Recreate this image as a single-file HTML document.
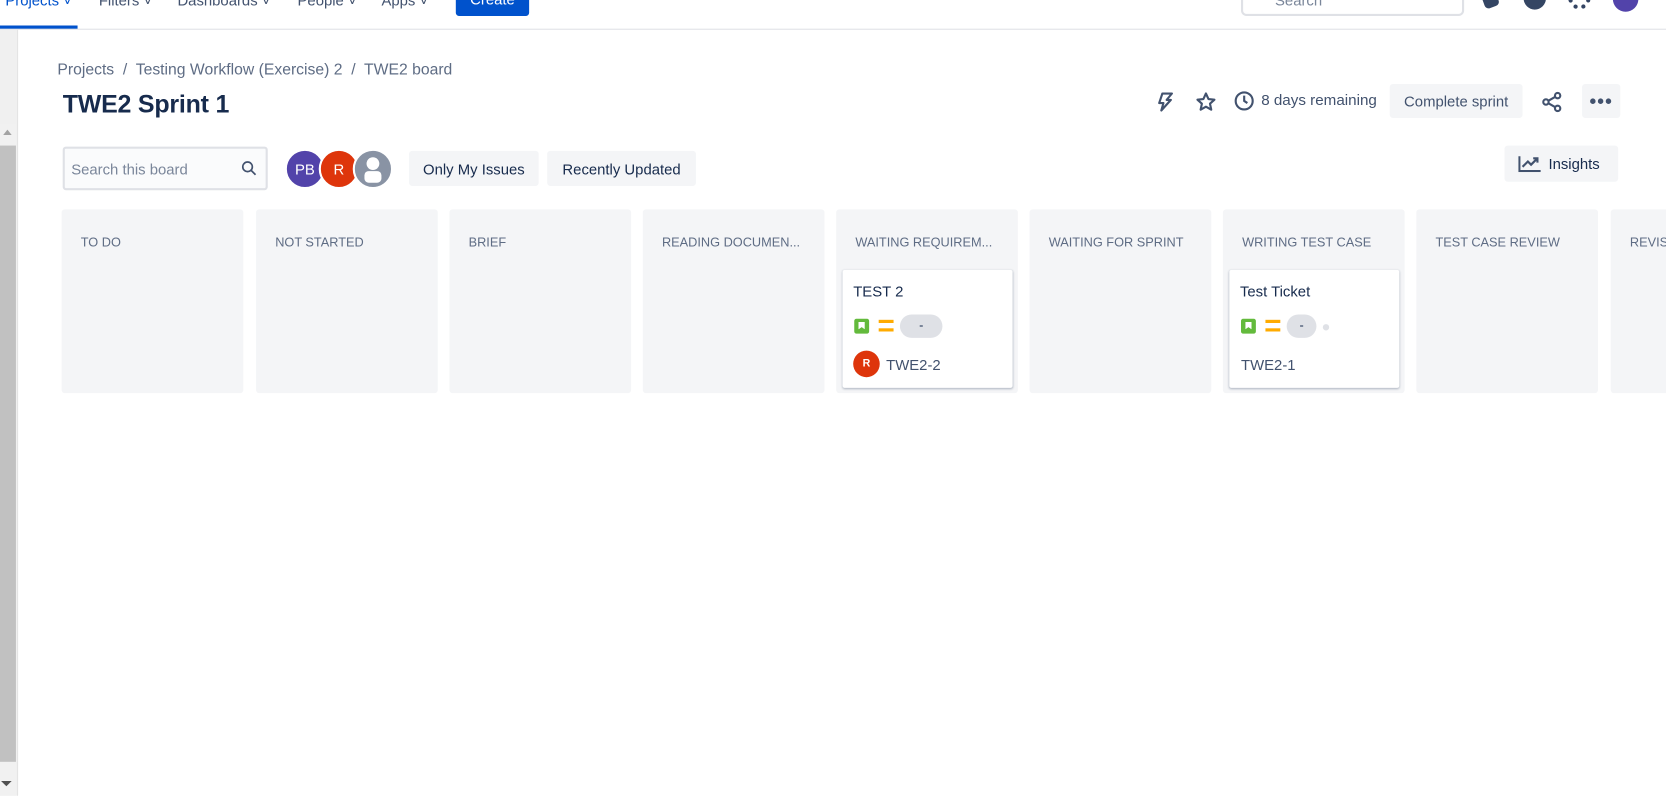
<!DOCTYPE html>
<html><head><meta charset="utf-8"><style>
*{box-sizing:border-box;margin:0;padding:0}
html,body{width:1666px;height:796px;overflow:hidden;background:#fff;font-family:"Liberation Sans",sans-serif}
#w{position:absolute;left:0;top:0;width:1568px;height:749px;transform:scale(1.0625);transform-origin:0 0;overflow:hidden}
.a{position:absolute}
.nav{font-size:14px;color:#42526e;top:-8px;white-space:nowrap}
.col{position:absolute;top:197px;width:171px;height:173px;background:#f4f5f7;border-radius:3px}
.col span{position:absolute;left:18px;top:24px;font-size:12px;color:#5e6c84;white-space:nowrap}
.btn{position:absolute;background:#f4f5f7;border-radius:3px;color:#42526e;font-size:14px;display:flex;align-items:center;justify-content:center}
.card{position:absolute;top:254px;width:160px;height:111px;background:#fff;border-radius:2px;box-shadow:0 1px 2px rgba(9,30,66,.3)}
.card .t{position:absolute;left:10px;top:12px;font-size:14px;color:#172b4d}
.story{position:absolute;left:11px;top:46px;width:14px;height:14px;background:#63ba3c;border-radius:2px}
.story:after{content:"";position:absolute;left:4px;top:3px;width:6px;height:7px;background:#fff;clip-path:polygon(0 0,100% 0,100% 100%,50% 70%,0 100%)}
.eq{position:absolute;left:34px;top:47px;width:14px;height:11px;border-top:3px solid #ffab00;border-bottom:3px solid #ffab00}
.pill{position:absolute;top:42px;height:22px;background:#dfe1e6;border-radius:11px;font-size:12px;color:#172b4d;text-align:center;line-height:20px}
.av{position:absolute;border-radius:50%;color:#fff;font-weight:bold;display:flex;align-items:center;justify-content:center}
</style></head><body><div id="w">
<div class="a" style="left:0;top:27px;width:1568px;height:1px;background:#dfe1e6"></div>
<div class="a nav" style="left:5px;color:#0052cc">Projects ˅</div>
<div class="a" style="left:0;top:24px;width:73px;height:3px;background:#0052cc"></div>
<div class="a nav" style="left:93px">Filters ˅</div>
<div class="a nav" style="left:167px">Dashboards ˅</div>
<div class="a nav" style="left:280px">People ˅</div>
<div class="a nav" style="left:359px">Apps ˅</div>
<div class="a" style="left:429px;top:-8px;width:69px;height:23px;background:#0052cc;border-radius:3px;color:#fff;font-size:14px;text-align:center;line-height:14px">Create</div>
<div class="a" style="left:1168px;top:-10px;width:210px;height:25px;border:2px solid #dfe1e6;border-radius:5px;font-size:14px;color:#7a869a;padding-left:30px;line-height:16px">Search</div>
<div class="a" style="left:1396px;top:-6px;width:14px;height:13px;background:#344563;border-radius:0 0 4px 4px;transform:rotate(-20deg)"></div>
<div class="a" style="left:1434px;top:-12px;width:21px;height:21px;background:#344563;border-radius:50%"></div>
<div class="a" style="left:1476px;top:-12px;width:21px;height:21px;border:4px dotted #344563;border-radius:50%"></div>
<div class="a" style="left:1518px;top:-13px;width:24px;height:24px;background:#5243aa;border-radius:50%"></div>
<div class="a" style="left:0;top:28px;width:17px;height:721px;background:#f0f0f0;border-right:1px solid #e4e4e4"></div>
<div class="a" style="left:0;top:117px;width:15px;height:632px;background:#f1f1f1"></div>
<div class="a" style="left:3px;top:122px;width:0;height:0;border-left:4px solid transparent;border-right:4px solid transparent;border-bottom:5px solid #a3a3a3"></div>
<div class="a" style="left:0;top:137px;width:15px;height:580px;background:#c1c1c1"></div>
<div class="a" style="left:1px;top:735px;width:0;height:0;border-left:5px solid transparent;border-right:5px solid transparent;border-top:5px solid #505050"></div>
<div class="a" style="left:54px;top:58px;font-size:14.8px;color:#5e6c84;white-space:nowrap">Projects &nbsp;/&nbsp; Testing Workflow (Exercise) 2 &nbsp;/&nbsp; TWE2 board</div>
<div class="a" style="left:59px;top:85px;font-size:23.5px;font-weight:bold;color:#172b4d;letter-spacing:-.2px">TWE2 Sprint 1</div>
<svg class="a" style="left:1086px;top:86px" width="20" height="20" viewBox="0 0 20 20" fill="none" stroke="#42526e" stroke-width="2" stroke-linejoin="round"><path d="M8 2h9l-5 6h4L7 18l2-7H5z"/></svg>
<svg class="a" style="left:1125px;top:86px" width="20" height="20" viewBox="0 0 20 20" fill="none" stroke="#42526e" stroke-width="2" stroke-linejoin="round"><path d="M10 2l2.4 5.2 5.6.6-4.2 3.8 1.2 5.6L10 14.4 5 17.2l1.2-5.6L2 7.8l5.6-.6z"/></svg>
<svg class="a" style="left:1161px;top:85px" width="20" height="20" viewBox="0 0 20 20" fill="none" stroke="#42526e" stroke-width="2"><circle cx="10" cy="10" r="8"/><path d="M10 5v5l3 2"/></svg>
<div class="a" style="left:1187px;top:87px;font-size:14.3px;color:#42526e">8 days remaining</div>
<div class="btn" style="left:1308px;top:79px;width:125px;height:32px">Complete sprint</div>
<svg class="a" style="left:1450px;top:85px" width="22" height="22" viewBox="0 0 22 22" fill="none" stroke="#42526e" stroke-width="2"><circle cx="16" cy="5" r="2.5"/><circle cx="16" cy="17" r="2.5"/><circle cx="5" cy="11" r="2.5"/><path d="M7 10l7-4M7 12l7 4"/></svg>
<div class="btn" style="left:1489px;top:79px;width:36px;height:32px;font-size:18px;font-weight:bold;letter-spacing:1px">•••</div>
<div class="a" style="left:59px;top:138px;width:193px;height:41px;background:#fafbfc;border:2px solid #dfe1e6;border-radius:3px"></div>
<div class="a" style="left:67px;top:151px;font-size:14px;color:#7a869a">Search this board</div>
<svg class="a" style="left:227px;top:151px" width="15" height="15" viewBox="0 0 15 15" fill="none" stroke="#42526e" stroke-width="1.6"><circle cx="6" cy="6" r="4.5"/><path d="M9.5 9.5l4 4"/></svg>
<div class="av" style="left:268px;top:140px;width:38px;height:38px;background:#5243aa;border:2px solid #fff;font-size:14px;font-weight:normal">PB</div>
<div class="av" style="left:300px;top:140px;width:38px;height:38px;background:#de350b;border:2px solid #fff;font-size:14px;font-weight:normal">R</div>
<div class="av" style="left:332px;top:140px;width:38px;height:38px;background:#8993a4;border:2px solid #fff">
<svg width="34" height="34" viewBox="0 0 34 34"><circle cx="17" cy="12" r="6" fill="#fff"/><rect x="9" y="19" width="16" height="11" rx="4" fill="#fff"/></svg></div>
<div class="btn" style="left:385px;top:142px;width:122px;height:33px;color:#172b4d">Only My Issues</div>
<div class="btn" style="left:515px;top:142px;width:140px;height:33px;color:#172b4d">Recently Updated</div>
<div class="btn" style="left:1416px;top:137px;width:107px;height:34px;color:#172b4d;padding-left:24px">Insights</div>
<svg class="a" style="left:1429px;top:146px" width="22" height="16" viewBox="0 0 22 16" fill="none" stroke="#42526e" stroke-width="2"><path d="M1 1v14h20M4 11l5-5 3 3 6-6M14 3h4v4"/></svg>
<div class="col" style="left:58px"><span>TO DO</span></div>
<div class="col" style="left:241px"><span>NOT STARTED</span></div>
<div class="col" style="left:423px"><span>BRIEF</span></div>
<div class="col" style="left:605px"><span>READING DOCUMEN...</span></div>
<div class="col" style="left:787px"><span>WAITING REQUIREM...</span></div>
<div class="col" style="left:969px"><span>WAITING FOR SPRINT</span></div>
<div class="col" style="left:1151px"><span>WRITING TEST CASE</span></div>
<div class="col" style="left:1333px"><span>TEST CASE REVIEW</span></div>
<div class="col" style="left:1516px"><span>REVISE</span></div>
<div class="card" style="left:793px"><div class="t">TEST 2</div><div class="story"></div><div class="eq"></div><div class="pill" style="left:54px;width:40px">-</div>
<div class="av" style="left:10px;top:76px;width:25px;height:25px;background:#de350b;font-size:10px">R</div>
<div class="a" style="left:41px;top:81px;font-size:14px;color:#42526e">TWE2-2</div></div>
<div class="card" style="left:1157px"><div class="t">Test Ticket</div><div class="story"></div><div class="eq"></div><div class="pill" style="left:54px;width:28px">-</div>
<div class="a" style="left:88px;top:51px;width:6px;height:6px;border-radius:50%;background:#dfe1e6"></div>
<div class="a" style="left:11px;top:81px;font-size:14px;color:#42526e">TWE2-1</div></div>
</div></body></html>
